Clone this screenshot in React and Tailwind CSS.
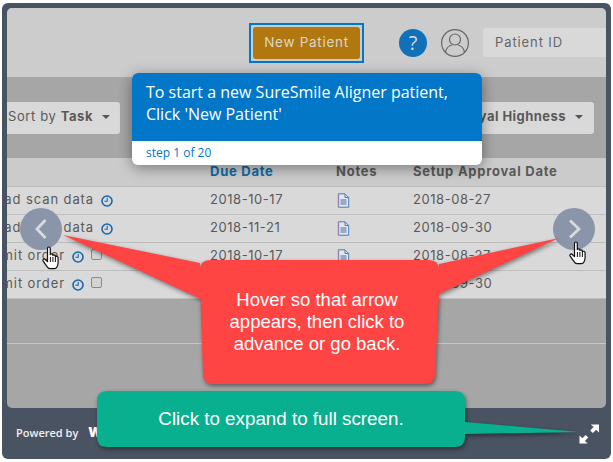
const rows = [
  { task: "Upload scan data", width: "w-[87px]", due: "2018-10-17", setup: "2018-08-27" },
  { task: "Upload scan data", width: "w-[87px]", due: "2018-11-21", setup: "2018-09-30" },
  { task: "Submit order", width: "w-[58px]", due: "2018-10-17", setup: "2018-08-27", check: true },
  { task: "Submit order", width: "w-[58px]", due: "2018-11-21", setup: "2018-09-30", check: true },
];

function ClockIcon() {
  return (
    <svg className="ml-[7px] mt-[1px] shrink-0" width="12" height="12" viewBox="0 0 12 12" fill="none" stroke="#1668ae">
      <circle cx="6" cy="6" r="5" strokeWidth="1.600" />
      <path d="M6.200 2.800v3.500H3.400" strokeWidth="1.100" />
    </svg>
  );
}

function DocIcon() {
  return (
    <svg width="13" height="15" viewBox="0 0 13 15" fill="none">
      <path d="M1.500 .8h6.500l3.700 3.700v9.700h-10.200z" stroke="#3f7fc0" fill="#e4e6ec" />
      <path d="M1.500 .8v13.400" stroke="#8d86ad" strokeWidth="1.400" />
      <path d="M8 1v3.500h3.500" stroke="#3f7fc0" />
      <path d="M3.500 7h6M3.500 9h6M3.500 11h6" stroke="#4d6f96" />
    </svg>
  );
}

function Hand({ className }) {
  return (
    <svg className={className} width="18" height="25" viewBox="0 0 18 25">
      <path
        d="M5.500 2.200c0-1.600 2.800-1.600 2.800 0v6.400c.4-1.200 2.500-1.100 2.600 .4v.6c.4-1.100 2.400-1 2.500 .5v.8c.4-1 2.700-.9 2.700 .8v4.800c0 2.200-.6 3.400-1.300 4.700-.5 1-1.200 1.400-2.300 1.400h-4.200c-1.200 0-2-.4-2.700-1.300-1.400-1.800-3-3.800-4.500-6.400-.8-1.500 1-2.600 2.200-1.400l2.200 2.200z"
        fill="#fff"
        stroke="#111"
        strokeWidth="1.200"
        strokeLinejoin="round"
      />
      <path d="M8.400 11v5M10.900 11v5M13.400 11v5" stroke="#111" strokeWidth="1" />
    </svg>
  );
}

function NavCircle({ className, d }) {
  return (
    <div className={`absolute top-[208px] flex h-[42px] w-[42px] items-center justify-center rounded-full bg-[#8b95a9] ${className}`}>
      <svg width="14" height="22" viewBox="0 0 14 22" fill="none">
        <path d={d} stroke="#d9dadd" strokeWidth="2.800" />
      </svg>
    </div>
  );
}

function Caret() {
  return <span className="ml-[9px] h-0 w-0 border-x-[4px] border-t-[4px] border-x-transparent border-t-[#555]" />;
}

function App() {
  return (
    <div className="relative h-[462px] w-[613px] overflow-hidden bg-white font-['Inter',sans-serif] text-[#595959]">
      <div className="mx-[2px] mt-[3px] flex h-[456px] flex-col rounded-[6px] bg-[#4a5361] px-[5px] pt-[5px]">
        <div className="flex h-[400px] flex-col overflow-hidden rounded-[5px] bg-[#a6a6a6]">
          <header className="flex h-[69px] shrink-0 items-center bg-[#cccccc] pl-[242px]">
            <div className="border-2 border-[#0277c8] p-[2px]">
              <button className="flex h-[32px] w-[107px] items-center justify-center rounded-[3px] bg-[#b0780f] text-[13.500px] tracking-[0.7px] text-[#dcd6c8]" type="button">
                New Patient
              </button>
            </div>
            <div className="ml-[35px] flex h-[28px] w-[28px] items-center justify-center rounded-full bg-[#1070b8] font-['Open_Sans',sans-serif] text-[20px] text-[#d5dde3]">?</div>
            <svg className="ml-[14px]" width="28" height="28" viewBox="0 0 28 28" fill="none" stroke="#666" strokeWidth="1.200">
              <circle cx="14" cy="14" r="13.400" />
              <circle cx="14" cy="10.500" r="5.500" />
              <path d="M4.500 23c1-4.500 4-6.500 6.500-7M23.500 23c-1-4.500-4-6.500-6.500-7" />
            </svg>
            <div className="ml-[14px] flex h-[29px] flex-1 items-center rounded-l-[3px] bg-[#d9d9d9] pl-[12px] text-[13px] tracking-[0.9px] text-[#666]">
              Patient ID
            </div>
          </header>

          <div className="flex h-[81px] shrink-0 items-center justify-between bg-[#a6a6a6] pr-[12px]">
            <div className="flex h-[32px] w-[113px] items-center whitespace-nowrap rounded-r-[3px] bg-[#d9d9d9] pb-[1px] pl-[1px] text-[13px] tracking-[0.6px]">
              Sort by&nbsp;<b className="font-bold">Task</b>
              <Caret />
            </div>
            <div className="flex h-[32px] w-[130px] items-center justify-end whitespace-nowrap rounded-[3px] bg-[#d9d9d9] pb-[1px] pr-[11px] text-[13px] font-bold tracking-[0.45px]">
              Royal Highness
              <Caret />
            </div>
          </div>

          <div className="flex h-[28px] shrink-0 items-center bg-[#cbcbcb] text-[13px] font-bold tracking-[0.75px]">
            <span className="ml-[203px] w-[126px] text-[#0e6aa8]">Due Date</span>
            <span className="w-[77px]">Notes</span>
            <span className="whitespace-nowrap">Setup Approval Date</span>
          </div>

          {rows.map((row, i) => (
            <div className="flex h-[28px] shrink-0 items-center border-t border-[#bdbdbd] bg-[#d9d9d9] pb-[1px] text-[13px] tracking-[0.55px] first:border-t-0" key={i}>
              <div className="flex w-[203px] shrink-0 items-center">
                <div className={`flex shrink-0 justify-end overflow-hidden whitespace-nowrap tracking-[0.9px] ${row.width}`}>
                  <span className="shrink-0">{row.task}</span>
                </div>
                <ClockIcon />
                {row.check && <span className="-mt-[3px] ml-[7px] h-[11px] w-[11px] shrink-0 rounded-[2px] border border-[#8a8a8a] bg-[#d4d4d4]" />}
              </div>
              <span className="w-[126px] shrink-0">{row.due}</span>
              <span className="w-[77px] shrink-0 pl-[1px]"><DocIcon /></span>
              <span className="shrink-0">{row.setup}</span>
            </div>
          ))}

          <div className="h-[45px] shrink-0 border-t border-[#bdbdbd]" />
          <div className="flex-1 border-t border-[#c6c6c6]" />
        </div>

        <footer className="flex flex-1 items-center pb-[1px] pl-[9px] text-[11px] font-semibold text-[#f0f0f0]">
          <span className="font-['Open_Sans',sans-serif]">Powered by</span>
          <span className="ml-[10px] text-[13px] font-black text-white">W</span>
        </footer>
      </div>

      {/* tutorial tooltip */}
      <div className="absolute left-[132px] top-[73px] w-[350px] overflow-hidden rounded-[6px] bg-white font-['Open_Sans',sans-serif] shadow-[0_3px_14px_rgba(0,0,0,0.4)]">
        <div className="h-[68px] bg-[#0277c8] px-[14px] pt-[8px] text-[16px] leading-[22px] text-white">
          To start a new SureSmile Aligner patient,
          <br />
          Click 'New Patient'
        </div>
        <div className="flex h-[24px] items-center px-[14px] text-[12px] text-[#0277c8]">step 1 of 20</div>
      </div>

      <NavCircle className="left-[20px]" d="M11.500 2l-8.500 9 8.500 9" />
      <NavCircle className="left-[553px]" d="M3 2.500l9 8.500-9 8.500" />
      <Hand className="absolute left-[42px] top-[246px]" />
      <Hand className="absolute left-[569px] top-[241px]" />

      {/* callout shapes with their tails */}
      <svg className="absolute inset-0" width="613" height="462" viewBox="0 0 613 462">
        <g style={{ filter: "drop-shadow(1px 2px 2px rgba(0,0,0,0.45))" }}>
          <path
            d="M210 260H429Q439 260 439 270V264L559 238 439 294 435 374Q435 384 425 384H213Q203 384 203 374L200.500 299 63 235 200 263V270Q200 260 210 260z"
            fill="#ff4444"
          />
          <path
            d="M107 391H455Q465 391 465 401V422L579 432 465 434V437Q465 447 455 447H107Q97 447 97 437V401Q97 391 107 391z"
            fill="#08b08f"
          />
        </g>
      </svg>

      <div className="absolute left-[198px] top-[260px] flex h-[124px] w-[238px] items-center justify-center px-[18px] text-center font-['Liberation_Sans',sans-serif] text-[18.500px] leading-[22px] text-white">
        Hover so that arrow appears, then click to advance or go back.
      </div>
      <div className="absolute left-[97px] top-[391px] flex h-[56px] w-[368px] items-center justify-center font-['Liberation_Sans',sans-serif] text-[18.800px] text-white">
        Click to expand to full screen.
      </div>

      <svg className="absolute left-[579px] top-[424px]" width="21" height="20" viewBox="0 0 21 20" fill="#fff">
        <path d="M20 .500v8l-2.800-2.800-3.400 3.400-2.600-2.600 3.400-3.400-2.800-2.600z" />
        <path d="M.500 19.500v-8l2.800 2.800 3.400-3.400 2.600 2.600-3.400 3.400 2.800 2.600z" />
      </svg>
    </div>
  );
}

export default App;
